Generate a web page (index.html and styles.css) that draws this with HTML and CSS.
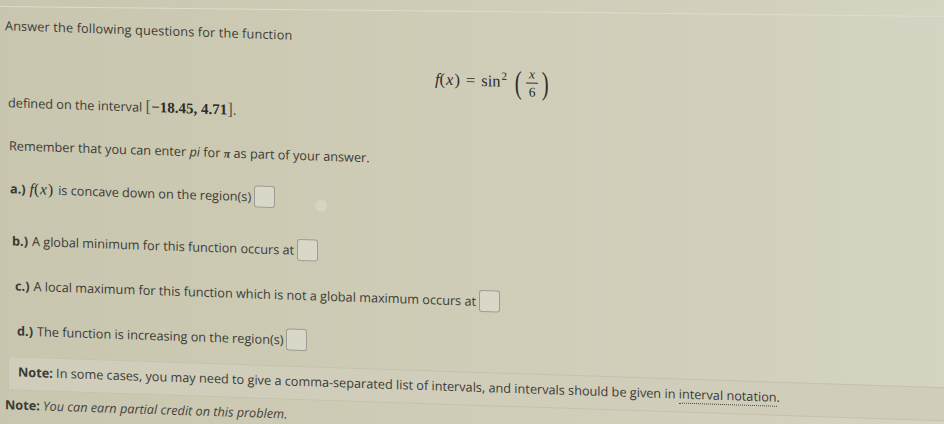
FILE: index.html
```html
<!DOCTYPE html>
<html>
<head>
<meta charset="utf-8">
<link rel="stylesheet" href="styles.css">
</head>
<body>
<div class="page">
  <div class="topline"></div>
  <div class="content">
    <p class="line intro">Answer the following questions for the function</p>
    <div class="formula">
      <span class="math"><i>f</i>(<i class="x">x</i>)<span class="op">=</span>sin<sup>2</sup></span><span class="paren">(</span><span class="frac"><span class="num"><i>x</i></span><span class="den">6</span></span><span class="paren close">)</span>
    </div>
    <p class="line defined">defined on the interval <span class="interval"><span class="br">[</span><b>−18.45, 4.71</b><span class="br">]</span></span>.</p>
    <p class="line remember">Remember that you can enter <i>pi</i> for <span class="pi">π</span> as part of your answer.</p>
    <p class="line q qa"><b>a.)</b> <span class="math"><i>f</i>(<i class="x">x</i>)</span> is concave down on the region(s)<span class="box"></span><span class="ghost"></span></p>
    <p class="line q qb"><b>b.)</b> A global minimum for this function occurs at<span class="box"></span></p>
    <p class="line q qc"><b>c.)</b> A local maximum for this function which is not a global maximum occurs at<span class="box"></span></p>
    <p class="line q qd"><b>d.)</b> The function is increasing on the region(s)<span class="box"></span></p>
    <div class="note">
      <p class="line"><b>Note:</b> In some cases, you may need to give a comma-separated list of intervals, and intervals should be given in <span class="dotted">interval notation</span>.</p>
    </div>
    <p class="line last"><b>Note:</b> <i>You can earn partial credit on this problem.</i></p>
  </div>
</div>
</body>
</html>
```
FILE: styles.css
```css
html, body {
  margin: 0;
  padding: 0;
}
body {
  width: 944px;
  height: 424px;
  overflow: hidden;
  background: linear-gradient(90deg, #c8c6ae 0%, #cfcdb7 50%, #d5d3c2 100%);
  font-family: "Open Sans", "Noto Sans", sans-serif;
  font-size: 12.7px;
  color: #3b3a35;
}
.page {
  position: relative;
  height: 424px;
  overflow: hidden;
}
.topline {
  height: 6px;
  border-bottom: 1px solid #dddccd;
  transform: skewY(0.6deg);
  transform-origin: 0 0;
}
.content {
  padding-top: 8px;
  transform: skewY(1.9deg);
  transform-origin: 0 0;
}
.line {
  margin: 0;
  line-height: 20px;
  white-space: nowrap;
}
.intro {
  margin-left: 5px;
  letter-spacing: 0.15px;
}
.formula {
  margin-top: 10px;
  height: 40px;
  display: flex;
  align-items: center;
  padding-left: 435px;
  font-family: "Liberation Serif", "DejaVu Serif", serif;
  color: #2e2d2a;
}
.math {
  font-family: "Liberation Serif", "DejaVu Serif", serif;
  font-size: 15.5px;
  color: #2e2d2a;
}
.math .x {
  padding: 0 1px;
}
.formula .math {
  font-size: 16.5px;
}
.op {
  margin: 0 6px;
}
.math sup {
  font-size: 11px;
  vertical-align: 7px;
  line-height: 0;
  margin-left: 1px;
}
.paren {
  font-size: 32px;
  font-weight: 300;
  line-height: 32px;
  margin: 0 2px 0 6px;
  transform: scaleX(0.65);
  display: inline-block;
}
.paren.close {
  margin: 0 0 0 2px;
}
.frac {
  display: inline-flex;
  flex-direction: column;
  align-items: center;
  font-size: 13.5px;
  line-height: 15px;
}
.num {
  border-bottom: 1px solid #2e2d2a;
  padding: 0 3px 1px;
}
.den {
  padding: 1px 3px 0;
}
.defined {
  margin-top: 7px;
  margin-left: 8px;
}
.interval {
  font-family: "Liberation Serif", "DejaVu Serif", serif;
  font-size: 15px;
  color: #2e2d2a;
}
.br {
  font-weight: 300;
  color: #55544e;
  font-size: 17px;
}
.remember {
  margin-top: 23px;
  margin-left: 9px;
}
.pi {
  font-family: "Liberation Serif", "DejaVu Serif", serif;
  font-style: italic;
  font-weight: bold;
  font-size: 12px;
}
.q {
  display: flex;
  align-items: center;
  height: 24px;
}
.q b {
  margin-right: 4px;
}
.q .math {
  margin-right: 5px;
}
.qa {
  margin-top: 20px;
  margin-left: 10px;
}
.qb {
  margin-top: 28px;
  margin-left: 12px;
}
.qc {
  margin-top: 21px;
  margin-left: 15px;
}
.qd {
  margin-top: 21px;
  margin-left: 17px;
}
.box {
  display: inline-block;
  width: 19px;
  height: 20px;
  margin-left: 3px;
  border: 1.5px solid #9e9d93;
  border-radius: 3px;
  background: #d9d7c8;
}
.ghost {
  display: inline-block;
  width: 12px;
  height: 12px;
  margin-left: 40px;
  margin-top: 14px;
  border-radius: 50%;
  background: #d9d7c6;
  opacity: 0.7;
}
.note {
  margin-top: 14px;
  margin-left: 8px;
  border: 1px solid #c4c2ad;
  border-right: none;
  background: #d0cebb;
  padding-left: 9px;
  padding-top: 4px;
  box-sizing: border-box;
  height: 34px;
}
.dotted {
  border-bottom: 1px dotted #4a4944;
}
.last {
  margin-top: 6px;
  margin-left: 5px;
  line-height: 16px;
}
.last i {
  color: #44433d;
}
```
